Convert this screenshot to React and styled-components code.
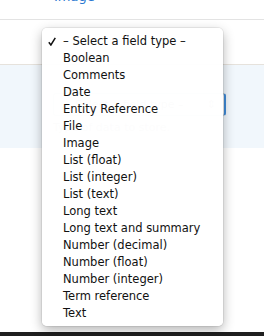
import styled, { createGlobalStyle } from 'styled-components';

const options = [
  '– Select a field type –',
  'Boolean',
  'Comments',
  'Date',
  'Entity Reference',
  'File',
  'Image',
  'List (float)',
  'List (integer)',
  'List (text)',
  'Long text',
  'Long text and summary',
  'Number (decimal)',
  'Number (float)',
  'Number (integer)',
  'Term reference',
  'Text',
];

const GlobalStyle = createGlobalStyle`
  html, body {
    margin: 0;
    padding: 0;
    background: #fff;
  }
  body {
    font-family: "DejaVu Sans", "Noto Sans", sans-serif;
  }
`;

const Page = styled.div`
  position: relative;
  width: 264px;
  height: 336px;
  overflow: hidden;
  display: flex;
  flex-direction: column;
  background: #fff;
`;

const TopRow = styled.div`
  height: 19px;
  border-bottom: 1px solid #e3e3e3;
  padding-left: 54px;
  overflow: hidden;
`;

const Link = styled.a`
  display: block;
  margin-top: -11px;
  font-size: 13px;
  color: #2a78d0;
  text-decoration: none;
`;

const Spacer = styled.div`
  height: 44px;
  border-bottom: 1px solid #e6e2dc;
`;

const FieldPanel = styled.div`
  height: 83px;
  background: #f1f7fc;
  padding: 28px 0 0 53px;
  box-sizing: border-box;
  display: flex;
  flex-direction: column;
  gap: 5px;
`;

const SelectBox = styled.div`
  width: 173px;
  height: 23px;
  box-sizing: border-box;
  border: 1px solid #c9d3dc;
  border-right: 2px solid #3f8ad6;
  border-radius: 3px;
  background: #fff;
  display: flex;
  align-items: center;
  justify-content: space-between;
  padding: 0 8px 0 12px;
  font-size: 11px;
  color: #aaa;
`;

const Hint = styled.div`
  font-size: 11px;
  color: #b4b4b4;
`;

const Fill = styled.div`
  flex: 1;
`;

const BottomBar = styled.div`
  height: 4px;
  background: #1f1f1f;
`;

const Menu = styled.ul`
  position: absolute;
  left: 42px;
  top: 28px;
  width: 181px;
  margin: 0;
  padding: 5px 0 4px;
  list-style: none;
  background: rgba(255, 255, 255, 0.96);
  border-radius: 5px;
  box-shadow: 0 0 0 1px rgba(0, 0, 0, 0.06), 0 4px 12px rgba(0, 0, 0, 0.3);
`;

const Item = styled.li`
  position: relative;
  height: 17px;
  line-height: 17px;
  padding-left: 21px;
  font-size: 11.5px;
  color: #111;
  white-space: nowrap;
`;

const Check = styled.svg`
  position: absolute;
  left: 6px;
  top: 4px;
`;

export default function App() {
  return (
    <>
      <GlobalStyle />
      <Page>
        <TopRow>
          <Link href="#">Image</Link>
        </TopRow>
        <Spacer />
        <FieldPanel>
          <SelectBox>
            <span>– Select a field type –</span>
            <span>⇕</span>
          </SelectBox>
          <Hint>Type of data to store.</Hint>
        </FieldPanel>
        <Fill />
        <BottomBar />
        <Menu>
          {options.map((label, i) => (
            <Item key={label}>
              {i === 0 && (
                <Check width="8" height="9" viewBox="0 0 8 9">
                  <path d="M0.8 5.2 L2.9 8 L7.3 0.8" fill="none" stroke="#111" strokeWidth="1.5" />
                </Check>
              )}
              {label}
            </Item>
          ))}
        </Menu>
      </Page>
    </>
  );
}
